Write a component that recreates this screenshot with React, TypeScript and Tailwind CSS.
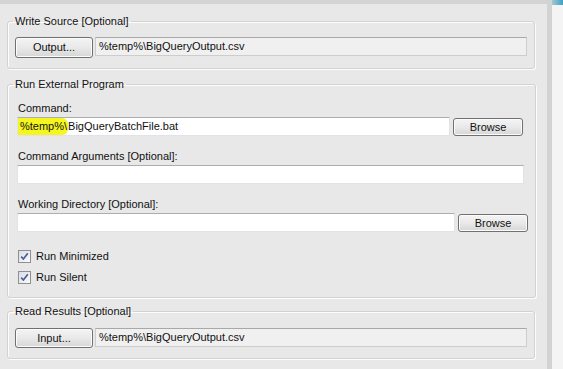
import React from "react";

const font = { fontFamily: '"Liberation Sans", Arial, sans-serif' };

function Btn({ label, className }: { label: string; className: string }) {
  return (
    <div
      className={`flex items-center justify-center rounded-[3px] border border-[#707070] bg-gradient-to-b from-[#f4f4f4] via-[#e9e9e9] to-[#d6d6d6] text-[11px] leading-none text-[#111] shadow-[inset_0_0_0_1px_#fcfcfc] ${className}`}
    >
      {label}
    </div>
  );
}

function Check({ label }: { label: string }) {
  return (
    <div className="flex h-[14px] items-center">
      <div className="ml-[3px] flex h-[13px] w-[13px] items-center justify-center border border-[#8e8f8f] bg-gradient-to-br from-[#d8dde6] to-[#fbfbfb]">
        <svg width="9" height="9" viewBox="0 0 9 9">
          <path d="M1.2 4.6 L3.4 7 L7.8 1.3" fill="none" stroke="#4a5f97" strokeWidth="1.7" />
        </svg>
      </div>
      <span className="ml-[5px] text-[11px] leading-[14px] text-[#111]">{label}</span>
    </div>
  );
}

function Group({ title, className, children }: { title: string; className: string; children: React.ReactNode }) {
  return (
    <fieldset
      className={`ml-[7px] w-[528px] rounded-[3px] border border-[#d2d2d2] pl-[7px] pr-[7px] shadow-[inset_1px_1px_0_#fdfdfd,1px_1px_0_#fdfdfd] ${className}`}
    >
      <legend className="-ml-[2px] px-[2px] text-[11px] leading-[14px] text-[#111]">{title}</legend>
      {children}
    </fieldset>
  );
}

export default function App() {
  return (
    <div className="relative flex h-[369px] w-[563px] overflow-hidden bg-[#e8e8e8]" style={font}>
      <div className="flex w-[547px] flex-col">
        <div className="h-[4px] w-full bg-[#d4d4d4]" />
        <Group title="Write Source [Optional]" className="mt-[10px] pb-[10px] pt-[9px]">
          <div className="flex items-start">
            <Btn label="Output..." className="h-[21px] w-[78px]" />
            <div className="ml-[2px] flex h-[19px] w-[432px] items-center border border-[#cdcdcd] border-t-[#a8a8a8] bg-[#f0f0f0] pl-[3px] text-[11px] text-[#111]">
              %temp%\BigQueryOutput.csv
            </div>
          </div>
        </Group>
        <Group title="Run External Program" className="mt-[8px] pb-[13px] pt-[10px]">
          <div className="pl-[2px]">
            <div className="pl-[1px] text-[11px] leading-[14px] text-[#111]">Command:</div>
            <div className="mt-[2px] flex items-start">
              <div className="flex h-[19px] w-[433px] items-stretch border border-[#e2e3ea] border-t-[#abadb3] bg-white text-[11px] text-[#111]">
                <span className="flex items-center rounded-r-[6px] bg-[#f5f51f] pl-[2px] pr-[1px]">%temp%\</span>
                <span className="flex items-center">BigQueryBatchFile.bat</span>
              </div>
              <Btn label="Browse" className="ml-[3px] mt-[1px] h-[18px] w-[70px]" />
            </div>
            <div className="mt-[13px] pl-[1px] text-[11px] leading-[14px] text-[#111]">Command Arguments [Optional]:</div>
            <div className="mt-[2px] h-[19px] w-[507px] border border-[#e2e3ea] border-t-[#abadb3] bg-white" />
            <div className="mt-[13px] pl-[1px] text-[11px] leading-[14px] text-[#111]">Working Directory [Optional]:</div>
            <div className="mt-[2px] flex items-start">
              <div className="h-[19px] w-[438px] border border-[#e2e3ea] border-t-[#abadb3] bg-white" />
              <Btn label="Browse" className="ml-[3px] mt-[1px] h-[18px] w-[70px]" />
            </div>
          </div>
          <div className="mt-[17px]">
            <Check label="Run Minimized" />
          </div>
          <div className="mt-[7px]">
            <Check label="Run Silent" />
          </div>
        </Group>
        <Group title="Read Results [Optional]" className="mt-[6px] pb-[10px] pt-[10px]">
          <div className="flex items-start">
            <Btn label="Input..." className="h-[20px] w-[78px]" />
            <div className="ml-[2px] flex h-[19px] w-[432px] items-center border border-[#cdcdcd] border-t-[#a8a8a8] bg-[#f0f0f0] pl-[3px] text-[11px] text-[#111]">
              %temp%\BigQueryOutput.csv
            </div>
          </div>
        </Group>
      </div>
      <div className="h-full w-[5px] bg-[#d3d3d3]" />
      <div className="flex h-full flex-1 flex-col bg-[#f4f4f4]">
        <div className="h-[5px] w-full bg-gradient-to-r from-[#9ec9d8] to-[#3f9fc2]" />
      </div>
    </div>
  );
}
